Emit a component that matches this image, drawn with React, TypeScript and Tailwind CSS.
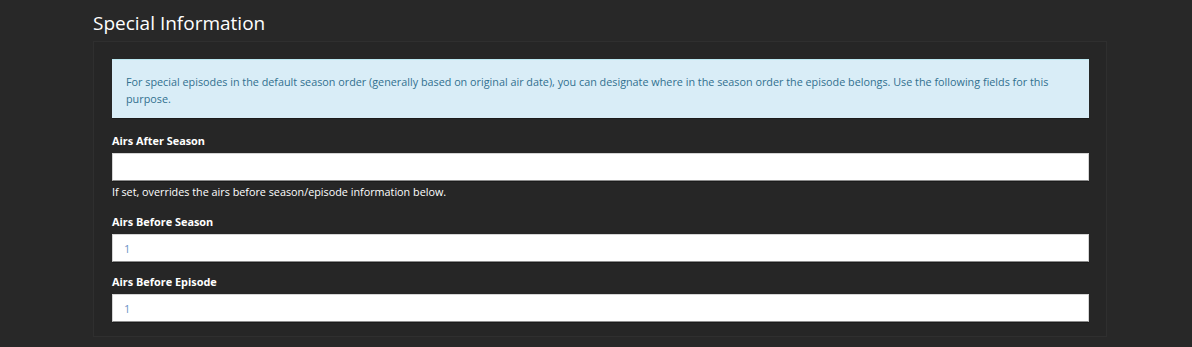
import React from "react";

const font = { fontFamily: '"Open Sans", "Noto Sans", sans-serif' };

const Field = ({ label, value }: { label: string; value?: string }) => (
  <div>
    <label className="block text-[10.9px] leading-[16px] font-bold text-white">
      {label}
    </label>
    <input
      readOnly
      value={value ?? ""}
      className="mt-[4px] block w-full h-[28px] bg-white border border-[#d4d4d4] border-b-[#8c8c8c] shadow-[0_1px_0_#1b1b1b] px-[11px] text-[11px] text-[#6d93c6] outline-none"
    />
  </div>
);

export default function App() {
  return (
    <div className="min-h-[347px] w-full bg-[#282828]" style={font}>
      <div className="pl-[93px] pr-[85px]">
        <h2 className="pt-[9px] text-[19px] leading-[28px] text-white">
          Special Information
        </h2>
        <div className="mt-[4px] border border-[#2f2f2f] bg-[#262626] pl-[18px] pr-[17px] pt-[17px] pb-[14px]">
          <div className="border-t border-[#bce8f1] bg-[#d9edf7] shadow-[0_1px_0_#1b1b1b] px-[14px] pt-[13px] pb-[11px] text-[10.8px] leading-[17px] text-[#31708f]">
            For special episodes in the default season order (generally based
            on original air date), you can designate where in the season order
            the episode belongs. Use the following fields for this purpose.
          </div>
          <div className="mt-[15px]">
            <Field label="Airs After Season" />
            <p className="mt-[3px] text-[10.8px] leading-[16px] text-white">
              If set, overrides the airs before season/episode information
              below.
            </p>
          </div>
          <div className="mt-[14px]">
            <Field label="Airs Before Season" value="1" />
          </div>
          <div className="mt-[12px]">
            <Field label="Airs Before Episode" value="1" />
          </div>
        </div>
      </div>
    </div>
  );
}
